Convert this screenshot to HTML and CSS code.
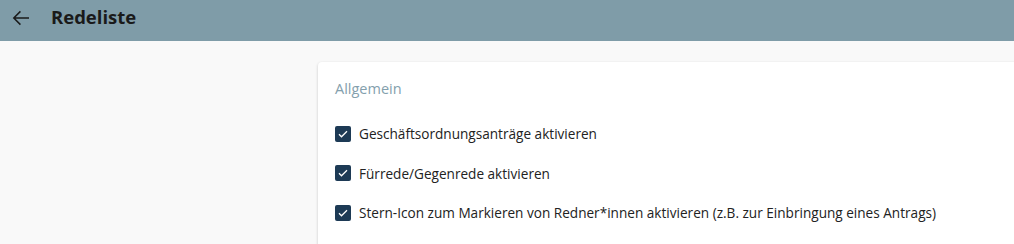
FILE: index.html
```html
<!DOCTYPE html>
<html lang="de">
<head>
<meta charset="utf-8">
<title>Redeliste</title>
<link rel="stylesheet" href="styles.css">
</head>
<body>
<header class="topbar">
  <button class="back" aria-label="Zurück">
    <svg width="24" height="24" viewBox="0 0 24 24"><path d="M20 11.25H6.6l5.35-5.35-1.05-1.05L3.75 12l7.15 7.15 1.05-1.05-5.35-5.35H20z" fill="#1a1a1a"/></svg>
  </button>
  <h1 class="title">Redeliste</h1>
</header>
<main class="content">
  <section class="card">
    <h2 class="card-title">Allgemein</h2>
    <label class="row"><span class="box"><svg width="12" height="12" viewBox="0 0 24 24"><path d="M4 12.5l5 5L20 6.5" fill="none" stroke="#fff" stroke-width="2.6"/></svg></span><span class="label">Geschäftsordnungsanträge aktivieren</span></label>
    <label class="row"><span class="box"><svg width="12" height="12" viewBox="0 0 24 24"><path d="M4 12.5l5 5L20 6.5" fill="none" stroke="#fff" stroke-width="2.6"/></svg></span><span class="label">Fürrede/Gegenrede aktivieren</span></label>
    <label class="row"><span class="box"><svg width="12" height="12" viewBox="0 0 24 24"><path d="M4 12.5l5 5L20 6.5" fill="none" stroke="#fff" stroke-width="2.6"/></svg></span><span class="label">Stern-Icon zum Markieren von Redner*innen aktivieren (z.B. zur Einbringung eines Antrags)</span></label>
  </section>
</main>
</body>
</html>
```
FILE: styles.css
```css
html, body {
  margin: 0;
  padding: 0;
  height: 100%;
  overflow: hidden;
}
body {
  background: #f9f9f9;
  font-family: "Open Sans", "Noto Sans", sans-serif;
  color: #222;
}
.topbar {
  height: 41px;
  box-sizing: border-box;
  padding: 0 0 5px 9px;
  background: #7f9ca8;
  display: flex;
  align-items: center;
}
.back {
  border: 0;
  background: none;
  padding: 0;
  width: 24px;
  height: 24px;
  display: flex;
  align-items: center;
  justify-content: center;
}
.title {
  margin: 0 0 4px 18px;
  font-size: 18.5px;
  font-weight: 700;
  color: #1a1a1a;
}
.content {
  padding: 21px 0 0 318px;
}
.card {
  width: 800px;
  height: 190px;
  background: #fff;
  border-radius: 4px;
  box-shadow: 0 1px 3px rgba(0,0,0,0.2);
  padding: 17px 17px 0;
  box-sizing: border-box;
}
.card-title {
  margin: 0 0 16px;
  font-size: 14.5px;
  font-weight: 400;
  color: #84a0ad;
}
.row {
  display: flex;
  align-items: center;
  height: 39.5px;
}
.box {
  width: 16px;
  height: 16px;
  border-radius: 2px;
  background: #1d3a55;
  display: flex;
  align-items: center;
  justify-content: center;
  margin-right: 8px;
  flex: none;
}
.label {
  font-size: 13.6px;
  color: #222;
}
```
